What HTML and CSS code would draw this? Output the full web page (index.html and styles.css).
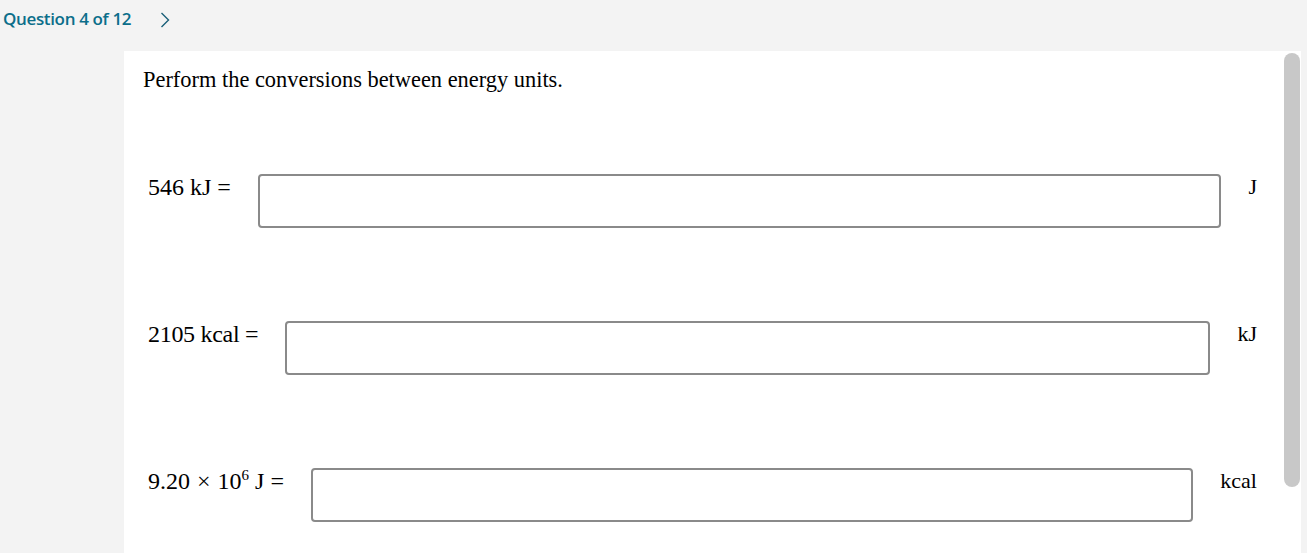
FILE: index.html
```html
<!DOCTYPE html>
<html>
<head>
<meta charset="utf-8">
<link rel="stylesheet" href="styles.css">
</head>
<body>
<div class="page">
  <div class="topbar">
    <span class="qnum">Question 4 of 12</span>
    <svg class="chev" width="12" height="18" viewBox="0 0 12 18"><path d="M2.5 2 L9.5 9 L2.5 16" fill="none" stroke="#1a5f78" stroke-width="1.4"/></svg>
  </div>
  <div class="main">
    <div class="panel">
      <p class="prompt">Perform the conversions between energy units.</p>
      <div class="row">
        <span class="label">546 kJ =</span>
        <div class="box"></div>
        <span class="unit">J</span>
      </div>
      <div class="row">
        <span class="label tight">2105 kcal =</span>
        <div class="box"></div>
        <span class="unit">kJ</span>
      </div>
      <div class="row">
        <span class="label">9.20 <span class="times">×</span> 10<sup>6</sup> J =</span>
        <div class="box"></div>
        <span class="unit">kcal</span>
      </div>
      <div class="thumb"></div>
    </div>
  </div>
</div>
</body>
</html>
```
FILE: styles.css
```css
html, body { margin: 0; padding: 0; }
body { background: #f3f3f3; width: 1307px; height: 553px; overflow: hidden; }
.page { display: flex; flex-direction: column; }
.topbar { height: 51px; display: flex; align-items: flex-start; padding-left: 3px; box-sizing: border-box; padding-top: 7px; }
.qnum { font-family: "Open Sans", sans-serif; font-weight: 600; font-size: 17px; color: #0b6e8a; letter-spacing: -0.35px; }
.chev { margin-left: 28px; margin-top: 4px; }
.main { padding-left: 124px; padding-right: 6px; }
.panel { background: #fff; height: 502px; position: relative; padding: 17px 44px 0 24px; box-sizing: border-box; font-family: "Liberation Serif", serif; color: #000; }
.prompt { margin: 0 0 0 -5px; font-size: 22.4px; line-height: 24px; }
.row { display: flex; align-items: flex-start; gap: 27px; margin-top: 82px; }
.row + .row { margin-top: 93px; }
.label, .unit { font-size: 24px; line-height: 24px; margin-top: 1px; white-space: nowrap; }
.label.tight { letter-spacing: -0.3px; }
.times { margin: 0 1px; }
.unit { font-size: 22px; }
.label sup { font-size: 15px; vertical-align: 9px; line-height: 0; }
.box { flex: 1; height: 54px; border: 2px solid #8a8a8a; border-radius: 4px; box-sizing: border-box; }
.thumb { position: absolute; right: 1px; top: 2px; width: 16px; height: 434px; background: #c8c8c8; border-radius: 8px; }
```
